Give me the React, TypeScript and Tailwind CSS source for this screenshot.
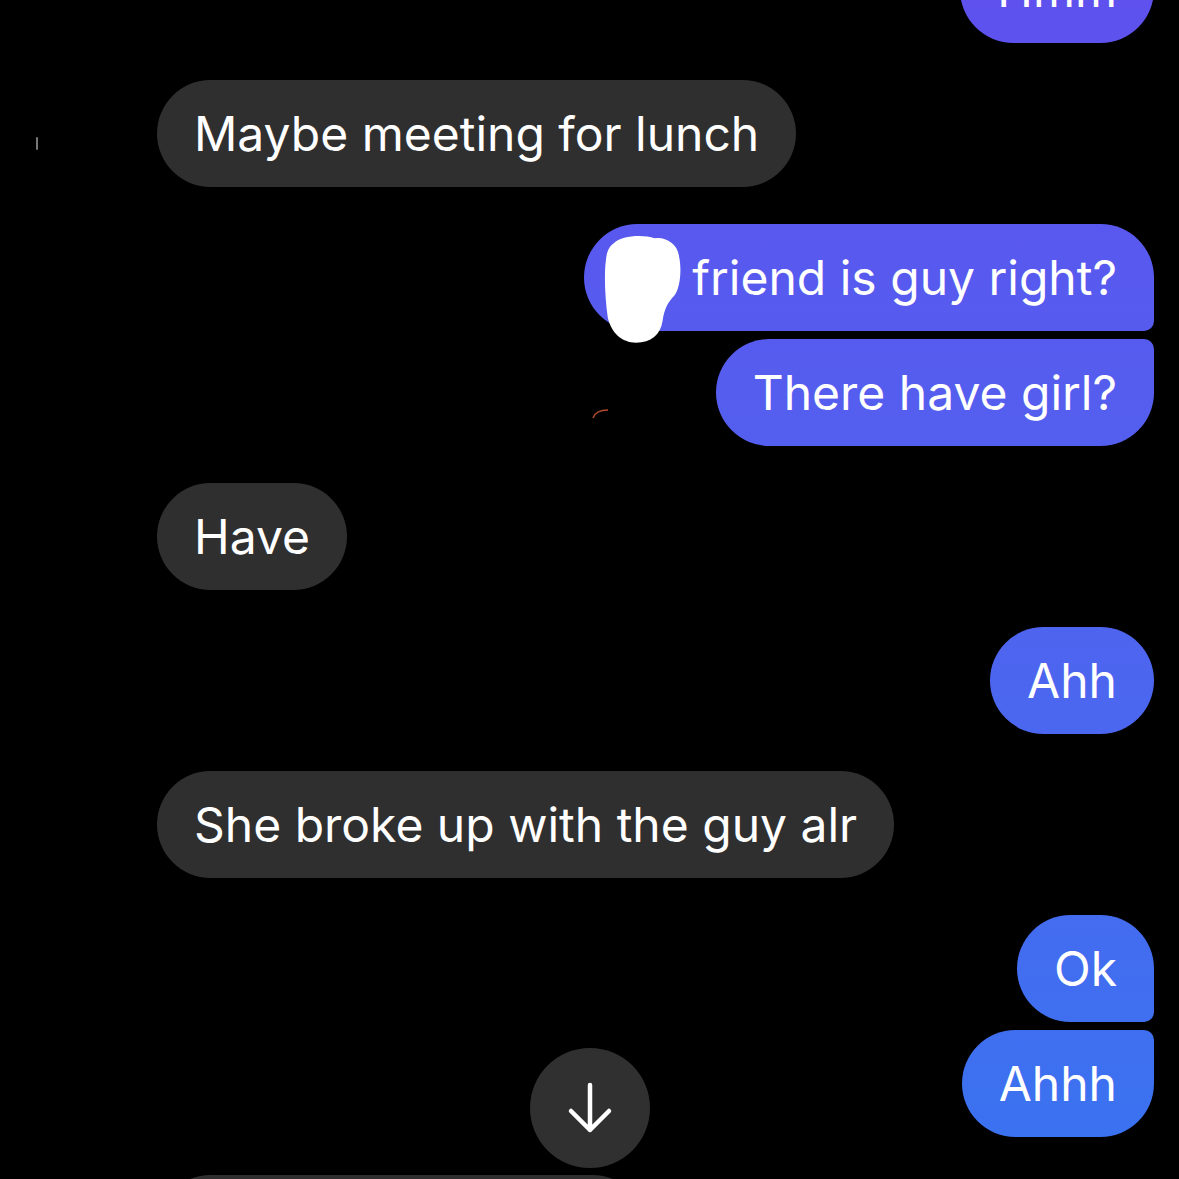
import React from "react";

type Msg = {
  text: string;
  me?: boolean;
  corner?: string;
  hidden?: boolean;
};

const messages: Msg[] = [
  { text: "Hmm", me: true },
  { text: "Maybe meeting for lunch" },
  { text: "friend is guy right?", me: true, corner: "rounded-br-[10px]", hidden: true },
  { text: "There have girl?", me: true, corner: "rounded-tr-[10px]" },
  { text: "Have" },
  { text: "Ahh", me: true },
  { text: "She broke up with the guy alr" },
  { text: "Ok", me: true, corner: "rounded-br-[10px]" },
  { text: "Ahhh", me: true, corner: "rounded-tr-[10px]" },
];

function Blob() {
  return (
    <svg
      className="absolute left-[20px] top-[11px]"
      width="78"
      height="110"
      viewBox="0 0 80 112"
    >
      <path
        d="M10 8 C18 0 40 -1 52 3 C62 1 76 8 77 22 C80 35 78 55 72 62 C66 68 62 75 60 88 C58 102 48 110 33 110 C18 110 8 100 4 85 C1 65 0 40 2 25 C3 15 6 11 10 8 Z"
        fill="#fff"
      />
    </svg>
  );
}

function Bubble({ m }: { m: Msg }) {
  return (
    <div
      className={
        "relative flex h-[107px] items-center rounded-[54px] px-[37px] text-[48px] text-white " +
        (m.me
          ? "self-end bg-fixed bg-linear-to-b from-[#5e51ee] to-[#3873f0] "
          : "self-start bg-[#2f2f2f] ") +
        (m.corner ?? "")
      }
    >
      {m.hidden && <span className="inline-block w-[71px]" />}
      <span className="leading-none">{m.text}</span>
      {m.hidden && <Blob />}
    </div>
  );
}

export default function App() {
  return (
    <div
      className="relative h-[1179px] w-[1179px] overflow-hidden bg-black"
      style={{ fontFamily: "Inter, 'Noto Sans', sans-serif" }}
    >
      <div className="mt-[-64px] flex flex-col pl-[157px] pr-[25px]">
        {messages.map((m, i) => {
          const prev = messages[i - 1];
          const gap = i === 0 ? "" : prev.me === m.me ? "mt-[8px]" : "mt-[37px]";
          return (
            <div key={i} className={"flex flex-col " + gap}>
              <Bubble m={m} />
            </div>
          );
        })}
        <div className="mt-[38px] h-[107px] w-[489px] rounded-[54px] bg-[#2f2f2f]" />
      </div>

      {/* scroll to bottom */}
      <button className="absolute left-[530px] top-[1048px] flex h-[120px] w-[120px] items-center justify-center rounded-full bg-[#303030]">
        <svg width="46" height="52" viewBox="0 0 46 52" fill="none">
          <path
            d="M23 3 V48 M4 29 L23 48 L42 29"
            stroke="#fff"
            strokeWidth="4.5"
            strokeLinecap="round"
            strokeLinejoin="round"
          />
        </svg>
      </button>

      {/* stray marks */}
      <span className="absolute left-[36px] top-[137px] h-[13px] w-[2px] rounded-full bg-[#777]" />
      <svg className="absolute left-[592px] top-[407px]" width="18" height="12" viewBox="0 0 18 12">
        <path d="M1 11 C3 5 8 3 16 3" stroke="#b24a2e" strokeWidth="1.5" fill="none" />
      </svg>
    </div>
  );
}
